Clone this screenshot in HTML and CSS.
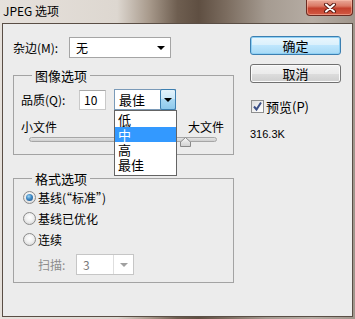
FILE: index.html
```html
<!DOCTYPE html>
<html lang="zh">
<head>
<meta charset="utf-8">
<title>JPEG 选项</title>
<link rel="stylesheet" href="styles.css">
</head>
<body>
<div class="window">
  <div class="titlebar">
    <span class="title">JPEG 选项</span>
    <div class="close">
      <svg width="14" height="10" viewBox="0 0 14 10">
        <path d="M3 1.5 L11 8.5 M11 1.5 L3 8.5" stroke="#5a1a12" stroke-width="4" stroke-linecap="round"/>
        <path d="M3 1.5 L11 8.5 M11 1.5 L3 8.5" stroke="#ffffff" stroke-width="2" stroke-linecap="round"/>
      </svg>
    </div>
  </div>
  <div class="client">
    <div class="left">
      <div class="row matte">
        <span class="lbl matte-lbl">杂边(M):</span>
        <div class="select matte-sel">
          <span class="sel-text">无</span>
          <span class="tri"></span>
        </div>
      </div>

      <div class="group g1">
        <span class="legend">图像选项</span>
        <div class="row quality">
          <span class="lbl q-lbl">品质(Q):</span>
          <div class="input">10</div>
          <div class="select q-sel">
            <span class="sel-text">最佳</span>
            <div class="arrow-btn"><span class="tri"></span></div>
            <ul class="dropdown">
              <li>低</li>
              <li class="hi">中</li>
              <li>高</li>
              <li>最佳</li>
            </ul>
          </div>
        </div>
        <div class="row sizes">
          <span>小文件</span>
          <span>大文件</span>
        </div>
        <div class="slider">
          <div class="track"></div>
          <div class="thumb">
            <svg width="11" height="10" viewBox="0 0 11 10">
              <defs>
                <linearGradient id="tg" x1="0" y1="0" x2="0" y2="1">
                  <stop offset="0" stop-color="#fafafa"/>
                  <stop offset="1" stop-color="#d0d0d0"/>
                </linearGradient>
              </defs>
              <path d="M0.5 9.5 L0.5 5 L5.5 0.5 L10.5 5 L10.5 9.5 Z" fill="url(#tg)" stroke="#8a8a8a"/>
            </svg>
          </div>
        </div>
      </div>

      <div class="group g2">
        <span class="legend">格式选项</span>
        <div class="row radio-row"><span class="radio checked"></span><span>基线(“标准”)</span></div>
        <div class="row radio-row"><span class="radio"></span><span>基线已优化</span></div>
        <div class="row radio-row"><span class="radio"></span><span>连续</span></div>
        <div class="row scan">
          <span class="lbl scan-lbl">扫描:</span>
          <div class="select scan-sel">
            <span class="sel-text">3</span>
            <span class="sep"></span>
            <span class="tri gray"></span>
          </div>
        </div>
      </div>
    </div>

    <div class="right">
      <div class="btn default">确定</div>
      <div class="btn">取消</div>
      <div class="row check-row">
        <span class="checkbox">
          <svg width="11" height="11" viewBox="0 0 11 11">
            <path d="M2 5.5 L4.5 8.5 L9 1.5" fill="none" stroke="#3b4f86" stroke-width="2"/>
          </svg>
        </span>
        <span>预览(P)</span>
      </div>
      <div class="size">316.3K</div>
    </div>
  </div>
</div>
</body>
</html>
```

FILE: styles.css
```css
* { box-sizing: border-box; }

body {
  margin: 0;
  width: 355px;
  height: 319px;
  overflow: hidden;
  font-family: "Noto Sans CJK SC", sans-serif;
  font-size: 12px;
  line-height: 15px;
  color: #000;
}

.window {
  width: 355px;
  height: 319px;
  display: flex;
  flex-direction: column;
  background:
    linear-gradient(to right, #e6e1dc 0%, #ddd7d0 33%, #a89a8c 42%, #6e5e50 50%, #5f4f42 56%, #7c6d60 64%, #a59b91 75%, #b6ada4 88%, #a0968c 100%);
}

.titlebar {
  height: 23px;
  display: flex;
  align-items: flex-start;
}

.title {
  margin: 3px 0 0 3px;
  font-size: 12px;
  line-height: 16px;
}

.close {
  margin-left: auto;
  margin-right: 2px;
  width: 47px;
  height: 16px;
  border: 1px solid #6b2c22;
  border-top: none;
  border-radius: 0 0 4px 4px;
  background: linear-gradient(#e9a999 0%, #db7a66 40%, #c4412d 55%, #d25a44 100%);
  box-shadow: inset 0 0 0 1px rgba(255, 200, 180, 0.5);
  display: flex;
  align-items: center;
  justify-content: center;
}

.client {
  flex: 1;
  margin: 0 2px 2px 2px;
  border: 1px solid #5a4e45;
  background: #ececec;
  display: flex;
}

.left {
  padding: 13px 0 0 10px;
  width: 231px;
  flex: none;
}

.row {
  display: flex;
  align-items: center;
}

.matte { height: 21px; }
.matte-lbl { width: 56px; }

.select {
  position: relative;
  height: 21px;
  border: 1px solid #a5a5a5;
  background: #fff;
  display: flex;
  align-items: center;
}

.sel-text { padding-left: 6px; flex: 1; }

.tri {
  width: 0;
  height: 0;
  border-left: 4px solid transparent;
  border-right: 4px solid transparent;
  border-top: 4px solid #000;
}

.matte-sel { width: 102px; }
.matte-sel .tri { margin-right: 5px; }

.group {
  position: relative;
  border: 1px solid #a3a3a3;
  width: 221px;
}

.legend {
  position: absolute;
  left: 18px;
  top: -8px;
  padding: 0 3px;
  background: #ececec;
  font-size: 13px;
}

.g1 {
  margin-top: 17px;
  padding: 13px 0 7px 7px;
}

.quality { height: 21px; }
.q-lbl { width: 58px; }

.input {
  width: 27px;
  height: 20px;
  border: 1px solid #c9c9c9;
  border-top-color: #a9a9a9;
  background: #fff;
  padding-left: 4px;
  line-height: 18px;
  margin-right: 8px;
}

.q-sel {
  width: 62px;
  border-color: #7a9ab8;
}
.q-sel .sel-text { padding-left: 4px; font-size: 13px; }

.arrow-btn {
  width: 16px;
  height: 21px;
  margin: -1px -1px -1px 0;
  border: 1px solid #3c7fb1;
  border-radius: 2px;
  background: linear-gradient(#e3f3fc 0%, #c9e7f8 50%, #a9d8f3 50%, #8ec9ec 100%);
  display: flex;
  align-items: center;
  justify-content: center;
}

.dropdown {
  position: absolute;
  z-index: 5;
  top: 20px;
  left: -1px;
  width: 63px;
  margin: 0;
  padding: 1px 0 3px;
  list-style: none;
  background: #fff;
  border: 1px solid #646464;
}

.dropdown li {
  height: 15px;
  line-height: 15px;
  padding-left: 3px;
  font-size: 13px;
}

.dropdown li.hi {
  background: #3399ff;
  color: #fff;
}

.sizes {
  margin-top: 9px;
  justify-content: space-between;
  padding-right: 9px;
}

.slider {
  position: relative;
  height: 10px;
  margin-top: 1px;
}

.track {
  margin: 3px 0 0 8px;
  width: 188px;
  height: 5px;
  border: 1px solid #a6a6a6;
  border-radius: 3px;
  background: linear-gradient(#e3e3e3, #cfcfcf);
}

.thumb {
  position: absolute;
  left: 159px;
  top: 0;
  width: 11px;
  height: 10px;
}
.thumb svg { display: block; }

.g2 {
  margin-top: 23px;
  padding: 8px 0 7px 9px;
}

.radio-row { height: 21px; }

.radio {
  width: 13px;
  height: 13px;
  margin-right: 2px;
  border-radius: 50%;
  border: 1px solid #8b8b8b;
  background: radial-gradient(circle at 50% 40%, #ffffff 0%, #f0f0f0 45%, #cdcdcd 100%);
  display: flex;
  align-items: center;
  justify-content: center;
}

.radio.checked::after {
  content: "";
  width: 7px;
  height: 7px;
  border-radius: 50%;
  background: radial-gradient(circle at 40% 35%, #9fd6f5 0%, #3d87c3 45%, #1c4d82 100%);
}

.scan {
  margin-top: 4px;
  padding-left: 15px;
  height: 21px;
}

.scan-lbl { width: 38px; color: #8d8d8d; }

.scan-sel {
  width: 58px;
  border-color: #c6c6c6;
  color: #7a7a7a;
  background: #fff;
}
.scan-sel .sel-text { padding-left: 6px; }

.sep {
  width: 1px;
  height: 19px;
  background: #dedede;
  margin-right: 6px;
}

.tri.gray {
  border-top-color: #a0a0a0;
  margin-right: 5px;
}

.right {
  margin-left: 16px;
  padding-top: 12px;
  display: flex;
  flex-direction: column;
  align-items: flex-start;
}

.btn {
  width: 91px;
  height: 19px;
  border: 1px solid #707070;
  border-radius: 3px;
  background: linear-gradient(#f3f3f3 0%, #ebebeb 50%, #dddddd 50%, #cfcfcf 100%);
  box-shadow: inset 0 0 0 1px #fbfbfb;
  text-align: center;
  line-height: 17px;
  font-size: 13px;
}

.btn.default {
  border-color: #3c7fb1;
  background: linear-gradient(#eaf6fd 0%, #d9f0fc 50%, #bee6fd 50%, #a7d9f5 100%);
  box-shadow: inset 0 0 0 1px #8fd0f4;
}

.btn + .btn { margin-top: 9px; }

.check-row {
  margin-top: 17px;
  padding-left: 1px;
  height: 13px;
  font-size: 13px;
}

.checkbox {
  width: 13px;
  height: 13px;
  margin-right: 2px;
  border: 1px solid #8e8f8f;
  background: linear-gradient(135deg, #dcdcdc 0%, #f4f4f4 60%, #ffffff 100%);
  display: flex;
  align-items: center;
  justify-content: center;
}
.checkbox svg { display: block; }

.size {
  margin-top: 14px;
  font-family: "Liberation Sans", Arial, sans-serif;
  font-size: 11px;
  line-height: 15px;
}
```
